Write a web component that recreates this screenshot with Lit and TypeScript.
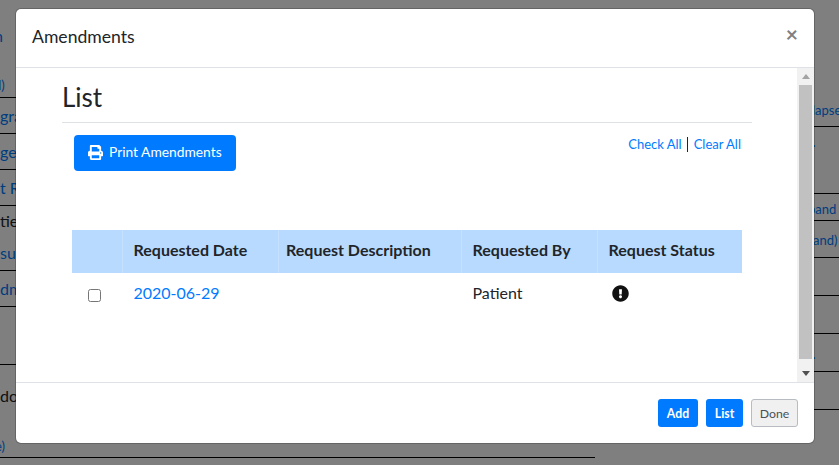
import { LitElement, html, css, svg } from "lit";
import { customElement } from "lit/decorators.js";

const printIcon = svg`<path fill="currentColor" d="M448 192V77.25c0-8.49-3.37-16.62-9.37-22.63L393.37 9.37c-6-6-14.14-9.37-22.63-9.37H96C78.33 0 64 14.33 64 32v160c-35.35 0-64 28.65-64 64v112c0 8.84 7.16 16 16 16h48v96c0 17.67 14.33 32 32 32h320c17.67 0 32-14.33 32-32v-96h48c8.84 0 16-7.16 16-16V256c0-35.35-28.65-64-64-64zm-64 256H128v-96h256v96zm0-224H128V64h192v48c0 8.84 7.16 16 16 16h48v96zm48 72c-13.25 0-24-10.75-24-24 0-13.26 10.75-24 24-24s24 10.74 24 24c0 13.25-10.75 24-24 24z"/>`;
const alertIcon = svg`<path fill="currentColor" d="M504 256c0 136.997-111.043 248-248 248S8 392.997 8 256C8 119.083 119.043 8 256 8s248 111.083 248 248zm-248 50c-25.405 0-46 20.595-46 46s20.595 46 46 46 46-20.595 46-46-20.595-46-46-46zm-43.673-165.346l7.418 136c.347 6.364 5.609 11.346 11.982 11.346h48.546c6.373 0 11.635-4.982 11.982-11.346l7.418-136c.375-6.874-5.098-12.654-11.982-12.654h-63.383c-6.884 0-12.356 5.78-11.981 12.654z"/>`;

interface Row { h: number; t?: string; link?: boolean; line?: boolean; x?: number; small?: boolean }

const leftRows: Row[] = [
  { h: 70, t: "n", link: true, x: -6 },
  { h: 2 },
  { h: 26, t: "d)", link: true, x: -6, line: true, small: true },
  { h: 36, t: "gram", link: true, line: true },
  { h: 36, t: "ge", link: true, line: true },
  { h: 36, t: "t R", link: true, line: true },
  { h: 28, t: "tie" },
  { h: 37, t: "sur", link: true, line: true },
  { h: 36, t: "dm", link: true, line: true },
  { h: 58, line: true },
  { h: 60, t: "doc" },
  { h: 10 },
  { h: 23, t: "e)", link: true, x: -5, line: true, small: true },
];

const rightRows: Row[] = [
  { h: 94 },
  { h: 33, t: "lapse", link: true, x: -1, line: true, small: true },
  { h: 26, t: ".", link: true, x: -1 },
  { h: 41, line: true },
  { h: 4 },
  { h: 23, t: "pand", link: true, x: -5, line: true, small: true },
  { h: 2 },
  { h: 35, t: "and)", link: true, line: true, small: true },
  { h: 38, line: true },
  { h: 38, line: true },
  { h: 38, t: ".", link: true, x: -1, line: true },
  { h: 38, line: true },
];

const bgRow = (r: Row) => html`<div
  class="row ${r.line ? "line" : ""} ${r.link ? "link" : ""} ${r.small ? "small" : ""}"
  style="height:${r.h}px"
>
  ${r.t ? html`<span style="margin-left:${r.x ?? 0}px">${r.t}</span>` : ""}
</div>`;

@customElement("app-root")
export class AppRoot extends LitElement {
  static styles = css`
    :host {
      display: block;
      position: relative;
      width: 839px;
      height: 465px;
      overflow: hidden;
      background: #fff;
      font-family: Lato, "Open Sans", sans-serif;
      color: #212529;
    }
    .page {
      display: flex;
      justify-content: space-between;
      height: 465px;
      font-size: 16px;
    }
    .left { width: 595px; }
    .right { width: 26px; }
    .row {
      box-sizing: border-box;
      display: flex;
      align-items: center;
      white-space: nowrap;
      overflow: hidden;
    }
    .row.line { border-bottom: 1px solid #000; }
    .row.small { font-size: 13px; }
    .row span { flex: none; }
    .link { color: #007bff; }
    .backdrop { position: absolute; inset: 0; background: rgba(0, 0, 0, 0.5); }

    .modal {
      position: absolute;
      left: 16px;
      top: 9px;
      width: 798px;
      height: 434px;
      background: #fff;
      border-radius: 5px;
      display: flex;
      flex-direction: column;
      box-shadow: 0 0 0 1px rgba(0, 0, 0, 0.2);
    }
    .header {
      height: 59px;
      flex: none;
      box-sizing: border-box;
      border-bottom: 1px solid #dee2e6;
      display: flex;
      align-items: center;
      justify-content: space-between;
      padding: 0 16px 2px 16px;
    }
    .title { font-size: 17.6px; line-height: 1.5; }
    .close { font-size: 21px; font-weight: 700; color: #808080; line-height: 1; margin-bottom: 7px; }
    .body { flex: 1; display: flex; min-height: 0; }
    .content { flex: 1; min-width: 0; padding: 0 45px 0 46px; }
    h2 {
      margin: 0;
      font-size: 26px;
      font-weight: 400;
      line-height: 32px;
      padding: 13px 0 9px 0;
      border-bottom: 1px solid #dee2e6;
      height: 32px;
      box-sizing: content-box;
    }
    .tools {
      display: flex;
      justify-content: space-between;
      align-items: flex-start;
      padding: 12px 11px 0 12px;
      height: 95px;
      box-sizing: border-box;
    }
    .print {
      display: flex;
      align-items: center;
      gap: 6px;
      box-sizing: border-box;
      height: 36px;
      width: 162px;
      padding: 0 0 2px 14px;
      background: #007bff;
      color: #fff;
      border-radius: 4px;
      font-size: 13.8px;
    }
    .print svg { width: 15px; height: 15px; }
    .print span { margin-top: -1px; }
    .checks {
      display: flex;
      align-items: center;
      font-size: 13px;
      color: #007bff;
      height: 18px;
    }
    .checks i { display: block; width: 1px; height: 15px; background: #212529; margin: 0 6px 0 5px; }
    .table { display: grid; grid-template-columns: 49.5px 156.5px 182.5px 136px 145.5px; margin: 12px 10px 0 10px; }
    .th {
      height: 43px;
      background: #b8daff;
      box-sizing: border-box;
      border-left: 1px solid #c6e0ff;
      padding: 0 0 4px 11px;
      display: flex;
      align-items: center;
      font-weight: 700;
      font-size: 16px;
      color: #212529;
    }
    .th:first-child { border-left: none; }
    .th.desc { padding-left: 7px; }
    .td {
      height: 39px;
      box-sizing: border-box;
      padding-left: 12px;
      display: flex;
      align-items: center;
      font-size: 16px;
    }
    .td.check { padding-left: 16px; }
    .box {
      width: 13px;
      height: 13px;
      box-sizing: border-box;
      border: 1px solid #767676;
      border-radius: 2.5px;
      background: #fff;
      margin-top: 6px;
    }
    .alert { width: 17px; height: 17px; margin: 1px 0 0 3px; color: #111; }

    .scrollbar {
      width: 17px;
      flex: none;
      background: #f1f1f1;
      display: flex;
      flex-direction: column;
      align-items: center;
    }
    .arrow { height: 17px; flex: none; display: flex; align-items: center; justify-content: center; }
    .arrow svg { width: 8px; height: 5px; }
    .thumb { height: 274px; flex: none; width: 13px; background: #c1c1c1; margin-bottom: auto; }

    .footer {
      height: 61px;
      flex: none;
      box-sizing: border-box;
      border-top: 1px solid #dee2e6;
      display: flex;
      align-items: center;
      justify-content: flex-end;
      gap: 8px;
      padding: 0 16px 0 0;
    }
    .btn {
      box-sizing: border-box;
      height: 28px;
      display: flex;
      align-items: center;
      justify-content: center;
      border-radius: 3px;
      font-size: 12.25px;
      background: #007bff;
      color: #fff;
      font-weight: 700;
    }
    .btn.add { width: 40px; }
    .btn.list { width: 37px; }
    .btn.done {
      width: 47px;
      background: #f0f0f0;
      border: 1px solid #b6bcc2;
      color: #495057;
      font-weight: 400;
    }
  `;

  render() {
    return html`
      <div class="page">
        <div class="left">${leftRows.map(bgRow)}</div>
        <div class="right">${rightRows.map(bgRow)}</div>
      </div>
      <div class="backdrop"></div>
      <div class="modal">
        <div class="header">
          <div class="title">Amendments</div>
          <div class="close">×</div>
        </div>
        <div class="body">
          <div class="content">
            <h2>List</h2>
            <div class="tools">
              <div class="print">
                <svg viewBox="0 0 512 512">${printIcon}</svg>
                <span>Print Amendments</span>
              </div>
              <div class="checks"><span>Check All</span><i></i><span>Clear All</span></div>
            </div>
            <div class="table">
              <div class="th"></div>
              <div class="th">Requested Date</div>
              <div class="th desc">Request Description</div>
              <div class="th">Requested By</div>
              <div class="th">Request Status</div>
              <div class="td check"><div class="box"></div></div>
              <div class="td link">2020-06-29</div>
              <div class="td"></div>
              <div class="td">Patient</div>
              <div class="td"><svg class="alert" viewBox="0 0 512 512">${alertIcon}</svg></div>
            </div>
          </div>
          <div class="scrollbar">
            <div class="arrow"><svg viewBox="0 0 8 5"><path d="M4 0 8 5H0z" fill="#a3a3a3"/></svg></div>
            <div class="thumb"></div>
            <div class="arrow"><svg viewBox="0 0 8 5"><path d="M0 0H8L4 5z" fill="#505050"/></svg></div>
          </div>
        </div>
        <div class="footer">
          <div class="btn add">Add</div>
          <div class="btn list">List</div>
          <div class="btn done">Done</div>
        </div>
      </div>
    `;
  }
}
